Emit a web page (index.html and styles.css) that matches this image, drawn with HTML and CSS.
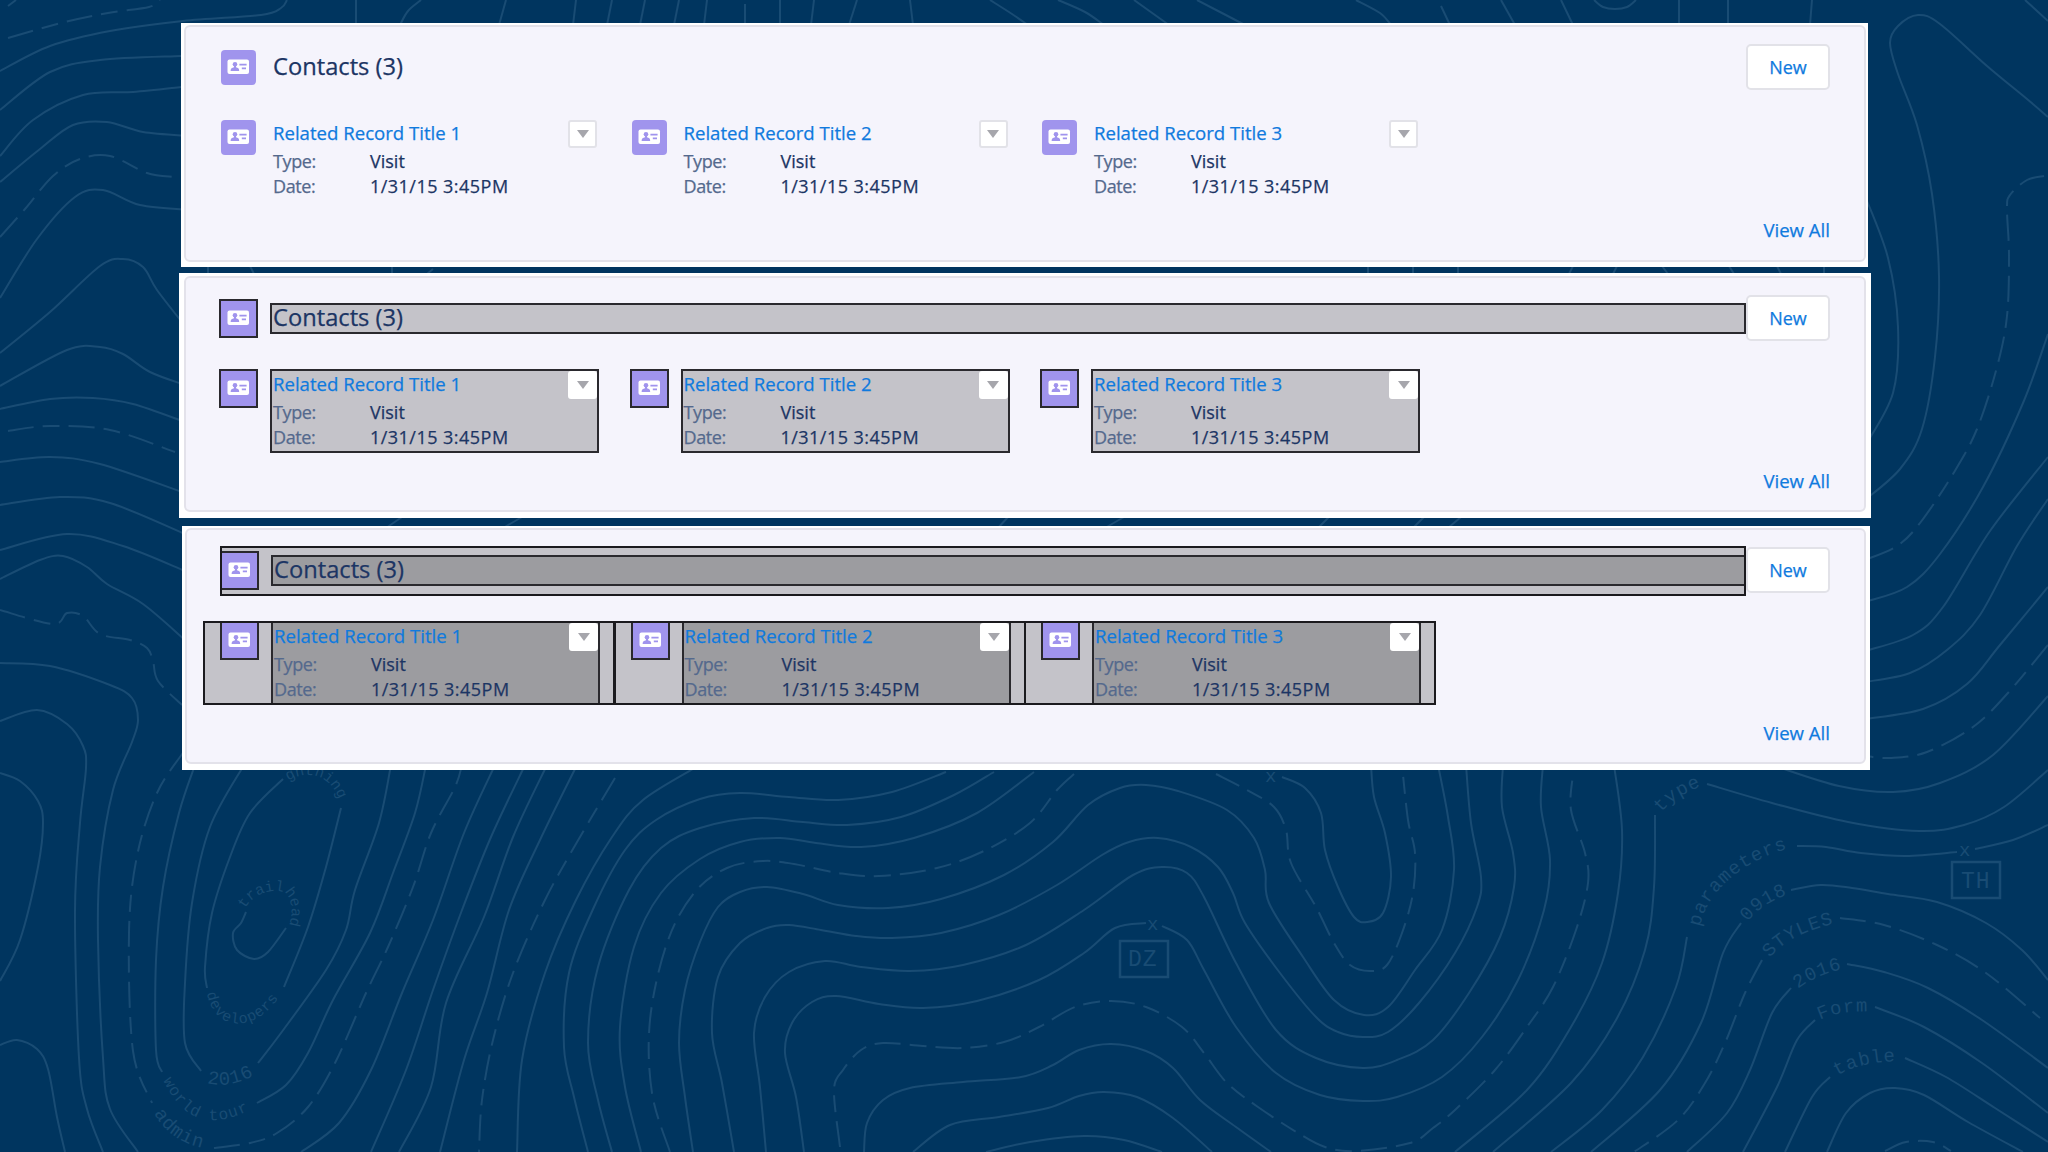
FILE: index.html
```html
<!DOCTYPE html>
<html lang="en">
<head>
    <meta charset="UTF-8">
    <meta name="viewport" content="width=device-width, initial-scale=1.0">
    <title>Related Records</title>
    <link rel="stylesheet" href="styles.css">
</head>
<body>
    <svg class="map" viewBox="0 0 2048 1152" aria-hidden="true">
        <defs>
            <path id="p-lightning" d="M288 781C308 768 335 775 341 808"/>
            <path id="p-trailhead" d="M245 909C252 893 278 886 287 895C294 905 292 918 287 932"/>
            <path id="p-developers" d="M207 993C214 1035 262 1035 286 985"/>
            <path id="p-2016a" d="M207 1083Q233 1090 263 1070"/>
            <path id="p-tour" d="M163 1080C180 1115 205 1134 254 1108"/>
            <path id="p-admin" d="M154 1113C165 1133 185 1147 214 1150"/>
            <path id="p-type" d="M1661 813Q1675 795 1708 784"/>
            <path id="p-parameters" d="M1700 927C1705 895 1740 860 1794 847"/>
            <path id="p-0918" d="M1748 922Q1760 904 1794 892"/>
            <path id="p-styles" d="M1770 958Q1788 933 1845 921"/>
            <path id="p-2016b" d="M1798 989Q1815 975 1850 967"/>
            <path id="p-form" d="M1820 1020Q1842 1009 1880 1012"/>
            <path id="p-table" d="M1837 1076Q1860 1061 1906 1061"/>
        </defs>
        <g id="contours"></g>
        <g class="map-text">
            <text class="small"><textPath href="#p-lightning">ghtning</textPath></text>
            <text class="small"><textPath href="#p-trailhead">trailhead</textPath></text>
            <text class="small wide"><textPath href="#p-developers">developers</textPath></text>
            <text><textPath href="#p-2016a">2016</textPath></text>
            <text class="mid"><textPath href="#p-tour">world tour</textPath></text>
            <text><textPath href="#p-admin">admin</textPath></text>
            <text><textPath href="#p-type">type</textPath></text>
            <text><textPath href="#p-parameters">parameters</textPath></text>
            <text><textPath href="#p-0918">0918</textPath></text>
            <text><textPath href="#p-styles">STYLES</textPath></text>
            <text><textPath href="#p-2016b">2016</textPath></text>
            <text><textPath href="#p-form">Form</textPath></text>
            <text><textPath href="#p-table">table</textPath></text>
            <text x="1147" y="930">x</text>
            <text x="1265" y="782">x</text>
            <text x="1959" y="856">x</text>
            <text class="big" x="1128" y="966">DZ</text>
            <text class="big" x="1961" y="888">TH</text>
        </g>
        <rect class="map-box" x="1120" y="941" width="48" height="36"/>
        <rect class="map-box" x="1952" y="862" width="48" height="36"/>
    </svg>

    <!-- contact icon, reused by every header and tile -->
    <svg class="sprite" aria-hidden="true">
        <symbol id="contact" viewBox="0 0 35 35">
            <rect x="6.5" y="9.500" width="21.500" height="14.500" rx="2" fill="#fff"/>
            <circle cx="14" cy="14.2" r="2.3"/>
            <path d="M13 15.500h2v1.800c2 .5 3.200 1.200 3.200 3.600H9.600c0-2.400 1.400-3.100 3.400-3.600z"/>
            <path d="M18.400 13.800h7.200v1.600h-7.200zM20.800 17.600h4.200v1.600h-4.200z"/>
        </symbol>
    </svg>

    <main>
        <section class="card card-plain">
            <div class="panel">
                <header class="header">
                    <div class="media">
                        <div class="figure"><svg class="icon"><use href="#contact"/></svg></div>
                        <h2 class="title">Contacts (3)</h2>
                    </div>
                    <button class="new">New</button>
                </header>
                <ul class="tiles">
                    <li class="tile">
                        <div class="figure"><svg class="icon"><use href="#contact"/></svg></div>
                        <div class="body">
                            <a class="name">Related Record Title 1</a>
                            <button class="more"></button>
                            <dl><dt>Type:</dt><dd>Visit</dd><dt>Date:</dt><dd>1/31/15 3:45PM</dd></dl>
                        </div>
                    </li>
                    <li class="tile">
                        <div class="figure"><svg class="icon"><use href="#contact"/></svg></div>
                        <div class="body">
                            <a class="name">Related Record Title 2</a>
                            <button class="more"></button>
                            <dl><dt>Type:</dt><dd>Visit</dd><dt>Date:</dt><dd>1/31/15 3:45PM</dd></dl>
                        </div>
                    </li>
                    <li class="tile">
                        <div class="figure"><svg class="icon"><use href="#contact"/></svg></div>
                        <div class="body">
                            <a class="name">Related Record Title 3</a>
                            <button class="more"></button>
                            <dl><dt>Type:</dt><dd>Visit</dd><dt>Date:</dt><dd>1/31/15 3:45PM</dd></dl>
                        </div>
                    </li>
                </ul>
                <footer class="footer"><a>View All</a></footer>
            </div>
        </section>

        <section class="card card-parts">
            <div class="panel">
                <header class="header">
                    <div class="media">
                        <div class="figure"><svg class="icon"><use href="#contact"/></svg></div>
                        <h2 class="title">Contacts (3)</h2>
                    </div>
                    <button class="new">New</button>
                </header>
                <ul class="tiles">
                    <li class="tile">
                        <div class="figure"><svg class="icon"><use href="#contact"/></svg></div>
                        <div class="body">
                            <a class="name">Related Record Title 1</a>
                            <button class="more"></button>
                            <dl><dt>Type:</dt><dd>Visit</dd><dt>Date:</dt><dd>1/31/15 3:45PM</dd></dl>
                        </div>
                    </li>
                    <li class="tile">
                        <div class="figure"><svg class="icon"><use href="#contact"/></svg></div>
                        <div class="body">
                            <a class="name">Related Record Title 2</a>
                            <button class="more"></button>
                            <dl><dt>Type:</dt><dd>Visit</dd><dt>Date:</dt><dd>1/31/15 3:45PM</dd></dl>
                        </div>
                    </li>
                    <li class="tile">
                        <div class="figure"><svg class="icon"><use href="#contact"/></svg></div>
                        <div class="body">
                            <a class="name">Related Record Title 3</a>
                            <button class="more"></button>
                            <dl><dt>Type:</dt><dd>Visit</dd><dt>Date:</dt><dd>1/31/15 3:45PM</dd></dl>
                        </div>
                    </li>
                </ul>
                <footer class="footer"><a>View All</a></footer>
            </div>
        </section>

        <section class="card card-parts card-media">
            <div class="panel">
                <header class="header">
                    <div class="media">
                        <div class="figure"><svg class="icon"><use href="#contact"/></svg></div>
                        <h2 class="title">Contacts (3)</h2>
                    </div>
                    <button class="new">New</button>
                </header>
                <ul class="tiles">
                    <li class="tile">
                        <div class="figure"><svg class="icon"><use href="#contact"/></svg></div>
                        <div class="body">
                            <a class="name">Related Record Title 1</a>
                            <button class="more"></button>
                            <dl><dt>Type:</dt><dd>Visit</dd><dt>Date:</dt><dd>1/31/15 3:45PM</dd></dl>
                        </div>
                    </li>
                    <li class="tile">
                        <div class="figure"><svg class="icon"><use href="#contact"/></svg></div>
                        <div class="body">
                            <a class="name">Related Record Title 2</a>
                            <button class="more"></button>
                            <dl><dt>Type:</dt><dd>Visit</dd><dt>Date:</dt><dd>1/31/15 3:45PM</dd></dl>
                        </div>
                    </li>
                    <li class="tile">
                        <div class="figure"><svg class="icon"><use href="#contact"/></svg></div>
                        <div class="body">
                            <a class="name">Related Record Title 3</a>
                            <button class="more"></button>
                            <dl><dt>Type:</dt><dd>Visit</dd><dt>Date:</dt><dd>1/31/15 3:45PM</dd></dl>
                        </div>
                    </li>
                </ul>
                <footer class="footer"><a>View All</a></footer>
            </div>
        </section>
    </main>

    <script src="contours.js"></script>
</body>
</html>
```

FILE: styles.css
```css
* {
    box-sizing: border-box;
}
body {
    margin: 0;
    min-height: 1152px;
    overflow: hidden;
    background: #00355f;
    color: #1c3564;
    font-family: "Open Sans", "Noto Sans", sans-serif;
    font-size: 18px;
}
main {
    position: relative;
    padding-top: 23px;
    -webkit-text-stroke: 0.25px;
}
h2, ul, dl, dd {
    margin: 0;
    padding: 0;
}
a {
    color: #0f7ade;
}

/* topographic background */
.map {
    position: absolute;
    top: 0;
    left: 0;
    width: 2048px;
    height: 1152px;
}
.map path, .map-box {
    fill: none;
    stroke: #194c74;
    stroke-width: 2;
}
.map .dashed {
    stroke-dasharray: 26 9 17 9;
}
.map-text {
    fill: #194c74;
    font-family: "Liberation Mono", monospace;
    font-size: 19px;
    letter-spacing: 1px;
}
.map-text .small {
    font-size: 15px;
    letter-spacing: 0;
}
.map-text .wide {
    letter-spacing: 0.8px;
}
.map-text .mid {
    font-size: 16px;
}
.map-text .big {
    font-size: 23px;
}
.map-box {
    stroke-width: 2.5;
}
.sprite {
    position: absolute;
    width: 0;
    height: 0;
}

/* cards */
.card {
    width: 1687px;
    height: 244px;
    margin-left: 181px;
    padding: 2px 2px 5px 3px;
    background: #fff;
}
.panel {
    height: 237px;
    padding: 16px 34px 0 33px;
    border: 2px solid #e3e2ea;
    border-radius: 6px;
    background: #f5f4fc;
}
.header {
    display: flex;
    align-items: center;
    height: 50px;
}
.media {
    display: flex;
    flex: 1;
    align-items: center;
    gap: 12px;
    height: 50px;
}
.figure {
    flex: none;
    width: 39px;
    height: 39px;
    padding: 2px;
}
.header .figure,
.header .title {
    margin-bottom: 2px;
}
.icon {
    display: block;
    width: 35px;
    height: 35px;
    border-radius: 4px;
    background: #a094ed;
    fill: #a094ed;
}
.title {
    flex: 1;
    height: 31px;
    padding-left: 3px;
    font-size: 23.700px;
    font-weight: 400;
    line-height: 28px;
}
.new {
    width: 84px;
    height: 46px;
    margin-bottom: 2px;
    padding: 0 0 1px;
    border: 2px solid #e2e2e8;
    border-radius: 5px;
    background: #fff;
    color: #0f7ade;
    font: inherit;
}
.tiles {
    display: flex;
    margin: 25px 0 0 -17px;
    list-style: none;
}
.tile {
    display: flex;
    flex: none;
    gap: 12px;
    width: 412px;
    height: 84px;
    margin-right: -1.5px;
    padding-left: 17px;
}
.body {
    display: grid;
    grid-template-columns: 1fr 29px;
    grid-template-rows: 31px 50px;
    width: 329px;
    padding: 0 2px 0 3px;
}
.name {
    font-size: 18.600px;
    line-height: 30px;
}
.more {
    display: flex;
    align-items: center;
    justify-content: center;
    height: 28px;
    margin-top: 2px;
    padding: 0;
    border: 2px solid #e2e2e8;
    border-radius: 3px;
    background: #fff;
}
.more::before {
    content: "";
    border: 6px solid transparent;
    border-top: 8px solid #a6a6ac;
    border-bottom: 0;
}
dl {
    display: grid;
    grid-column: 1 / 3;
    grid-template-columns: 97px 1fr;
    line-height: 25px;
}
dt {
    color: #54698d;
    letter-spacing: -0.4px;
}
dd:last-child {
    letter-spacing: 0.47px;
}
.footer {
    margin-top: 15px;
    text-align: right;
    font-size: 18.600px;
    line-height: 25px;
}

/* second card: figure and body marked */
.card-parts {
    width: 1692px;
    height: 245px;
    margin: 6px 0 0 179px;
    padding: 3px 5px 6px 5px;
}
.card-parts .panel {
    height: 236px;
}
.card-parts .icon {
    border-radius: 0;
}
.card-parts .figure,
.card-parts .title,
.card-parts .body {
    outline: 2px solid #2a292e;
    outline-offset: -2px;
}
.card-parts .title,
.card-parts .body {
    background: rgba(0, 0, 0, 0.2);
}
.card-parts .more {
    border-color: #fff;
}

/* third card: the media containers marked as well */
.card-media {
    width: 1688px;
    height: 244px;
    margin: 8px 0 0 182px;
    padding: 2px 4px 5px 3px;
}
.card-media .media,
.card-media .tile {
    outline: 2px solid #1b1a1e;
    outline-offset: -2px;
    background: rgba(0, 0, 0, 0.2);
}
```

FILE: contours.js
```js
// Contour lines as "x,y" points, smoothed when they are drawn
const SOLID = [
    "8,6 16,0",
    "0,71 50,46 110,31 183,21 261,15 281,8 287,0",
    "0,110 50,72 100,60 181,56",
    "0,156 33,120 83,95 133,92 181,87",
    "0,182 40,149 73,125 107,122 143,132 190,136",
    "0,298 37,239 75,197 103,190 140,205 190,210",
    "0,353 50,312 100,266 123,259 143,267 157,290 185,326",
    "0,386 67,350 100,347 123,354 150,372 185,385",
    "0,409 50,399 93,398 133,404 185,422",
    "0,462 50,457 100,464 185,493",
    "0,505 60,497 110,503 185,534",
    "0,550 67,534 123,546 185,571",
    "0,579 40,560 63,556 87,567 107,584 143,604 185,640",
    "0,663 50,666 110,685 132,698 138,720 132,742 113,790 100,867 98,940 103,1058 110,1109 138,1152",
    "0,721 37,710 67,724 83,746 86,768 80,823 75,911 79,1058 87,1109 103,1152",
    "0,773 20,781 38,801 43,823 38,867 20,940 0,981",
    "0,1045 17,1040 37,1049 48,1069 57,1117 65,1152",
    "195,765 179,813 163,887 156,960 156,1050 162,1072",
    "257,1103 286,1085 308,1053 333,1000 370,933 393,873 415,813 426,765",
    "244,765 210,827 192,903 185,983 185,1043 201,1071",
    "258,1063 281,1033 326,970 346,930 355,890 379,823 391,765",
    "283,779 250,813 230,857 212,913 205,967 207,988",
    "284,987 308,927 326,867 341,808",
    "246,912 241,923 233,933 237,950 254,959 268,952 286,928",
    "495,765 464,833 433,920 402,993 371,1070 339,1123 301,1152",
    "525,765 491,837 462,910 433,990 406,1070 371,1152",
    "547,765 513,837 484,917 446,1003 431,1087 399,1152",
    "577,765 540,840 509,910 487,993 464,1060 440,1152",
    "700,765 643,800 612,837 576,900 545,973 522,1060 517,1152",
    "588,1152 574,1097 564,1047 569,973 594,907 625,850 656,820 700,799 740,793 789,797 838,800 892,792 946,772",
    "612,1152 598,1100 588,1043 598,967 629,890 661,848 700,828 754,818 803,822 847,825 901,817 954,795 994,772",
    "641,1152 625,1087 620,1027 634,947 661,893 700,859 740,842 780,838 816,843 861,847 914,838 977,813 1034,772",
    "693,1152 685,1097 679,1043 685,990 700,942 718,907 740,892 767,887 803,894 838,905 888,908 941,899 1004,875 1053,842 1088,805 1120,788 1146,785 1178,791 1227,810 1254,838 1265,870 1269,903 1303,957 1334,1000 1364,1015 1388,1007 1415,970 1442,930 1454,870 1448,817 1438,765",
    "734,1152 722,1083 712,1033 718,977 740,943 767,928 789,925 821,930 856,936 892,938 941,933 999,915 1057,885 1102,855 1129,842 1158,838 1191,847 1218,867 1233,893 1245,923 1280,973 1316,1017 1338,1032 1363,1037 1388,1032 1419,1003 1455,953 1477,907 1481,877 1471,823 1466,765",
    "766,1152 760,1087 754,1033 765,997 789,972 825,961 861,967 910,971 963,965 1026,945 1084,910 1133,875 1162,867 1187,873 1204,897 1236,963 1276,1030 1316,1058 1363,1068 1397,1060 1433,1040 1469,993 1500,937 1514,887 1513,853 1502,807 1503,765",
    "804,1152 796,1097 785,1053 792,1023 812,1002 836,996 879,1004 923,1008 977,1001 1039,980 1084,953 1115,928 1146,923",
    "1162,926 1187,940 1204,970 1236,1027 1276,1073 1320,1095 1363,1101 1397,1097 1442,1077 1482,1037 1518,980 1544,910 1550,860 1541,807 1543,765",
    "864,1152 867,1123 883,1100 910,1088 963,1082 1021,1077 1053,1065 1079,1050 1111,1044 1146,1051 1173,1068 1200,1100 1236,1127 1271,1152",
    "913,1152 950,1125 999,1117 1048,1108 1079,1096 1104,1092 1137,1097 1173,1118 1212,1152",
    "986,1152 1030,1142 1084,1136 1124,1140 1162,1152",
    "1282,777 1305,788 1321,813 1325,850 1338,887 1354,917 1367,922 1383,913 1391,877 1385,833 1374,797 1371,765",
    "1614,765 1622,830 1618,893 1602,963 1571,1027 1527,1090 1455,1152",
    "1655,815 1654,887 1645,950 1616,1020 1571,1083 1493,1152",
    "1707,784 1772,803 1848,822 1919,831 1964,825 2004,807 2048,770",
    "1775,766 1839,786 1893,792 1940,783 1993,755 2048,696",
    "1687,937 1676,987 1643,1057 1602,1110 1551,1152",
    "1797,846 1826,847 1861,853 1906,856 1957,852",
    "1975,849 2013,840 2048,825",
    "1741,923 1723,953 1701,1023 1660,1090 1591,1152",
    "1791,890 1821,885 1852,888 1888,894 1937,902 1986,923 2022,950 2048,980",
    "1791,988 1772,1013 1750,1070 1727,1113 1687,1152",
    "1847,964 1884,972 1928,988 1982,1020 2048,1068",
    "1815,1020 1797,1040 1777,1087 1743,1152",
    "1875,1007 1924,1027 1982,1063 2048,1113",
    "1830,1077 1812,1097 1785,1152",
    "1905,1058 1946,1077 1995,1108 2048,1142",
    "1827,1152 1846,1113 1870,1093 1895,1088 1924,1095 1968,1122 2023,1152",
    "2025,0 2048,21",
    "2048,117 2027,99 1987,66 1940,24 1918,15 1898,26 1890,43 1898,74 1917,125 1932,194 1939,276 1935,357 1922,429 1900,469 1865,500",
    "1865,196 1888,258 1898,327 1893,393 1865,446",
    "2048,334 2023,403 1983,487 1940,554 1907,587 1865,602",
    "2048,457 1990,531 1943,607 1913,635 1865,651",
    "2048,499 2017,546 1980,615 1947,650 1910,673 1865,682",
    "2048,587 2000,645 1967,684 1923,709 1865,719",
    // strip above the first card
    "356,0 356,25", "421,0 408,11 400,25", "506,0 499,25", "576,0 573,25", "612,0 607,25",
    "645,0 640,25", "679,0 674,25", "707,0 704,25", "745,4 745,25", "780,0 780,25",
    "814,0 811,25", "857,0 849,25", "910,0 913,25", "990,0 1012,14 1028,25",
    "1058,0 1085,12 1104,25", "1134,0 1169,25", "1197,0 1245,25", "1356,0 1380,13 1391,25",
    "1441,6 1450,25", "1501,0 1515,25", "1561,0 1573,25", "1594,0 1603,7 1615,9 1627,7 1636,0",
    "1679,0 1679,25", "1728,0 1728,25", "1812,0 1810,25",
    // strips between the cards
    "208,266 208,274", "250,266 254,274", "392,266 392,274", "433,269 427,274",
    "1368,266 1368,274", "1413,266 1413,274", "1458,266 1458,274", "1573,266 1569,274",
    "1617,266 1613,274", "1662,266 1668,274", "1729,266 1734,274", "1777,266 1781,274", "1824,266 1824,274",
    "402,517 386,528", "522,517 503,528", "1008,517 998,528", "1124,517 1105,528",
    "1329,517 1318,528", "1424,517 1413,528", "1461,517 1448,528"
];

const DASHED = [
    "8,38 65,22 108,13 149,7 160,0",
    "0,237 25,209 53,176 80,159 110,156 147,173 174,177",
    "8,431 50,426 110,430 175,452",
    "0,610 53,624 67,613 83,616 100,634 130,640 147,648 153,661 158,681 182,705",
    "185,750 157,793 137,856 129,933 133,1051 152,1103",
    "214,1148 250,1143 277,1133 308,1107 335,1063 366,993 388,947 413,887 431,833 455,787 462,765",
    "615,778 580,837 545,900 513,973 493,1040 482,1100 479,1152",
    "670,1152 652,1093 650,1020 667,943 694,893 727,868 763,861 794,864 838,873 879,876 937,868 986,850 1030,823 1057,790 1074,774",
    "840,1147 834,1090 843,1070 861,1050 883,1043 923,1046 963,1048 1004,1042 1039,1027 1075,1007 1111,1001 1146,1007 1182,1027 1204,1053 1227,1083 1258,1107 1298,1133 1325,1147 1356,1151 1410,1143 1433,1128 1455,1110 1495,1070 1527,1027 1553,987 1576,930 1588,883 1585,853 1571,810 1573,774",
    "1216,774 1247,790 1274,807 1286,830 1291,863 1316,907 1334,943 1350,965 1370,971 1387,965 1402,933 1413,893 1415,853 1408,820 1402,765",
    "1762,960 1745,993 1725,1043 1705,1083 1678,1120 1634,1152",
    "1840,918 1884,925 1937,945 1986,973 2040,1018",
    "1885,1151 1906,1142 1933,1142 1951,1151",
    "2044,176 2027,180 2010,195 2007,209 2009,255 2007,316 1997,367 1977,429 1953,474 1920,523 1897,546 1865,560",
    "2048,645 2007,694 1973,727 1927,752 1890,758 1865,756"
];

function smooth(line) {
    const p = line.split(" ").map(s => s.split(",").map(Number));
    let d = `M${p[0]}`;
    for (let i = 0; i < p.length - 1; i++) {
        const a = p[i - 1] || p[i];
        const b = p[i];
        const c = p[i + 1];
        const e = p[i + 2] || c;
        d += `C${b[0] + (c[0] - a[0]) / 6},${b[1] + (c[1] - a[1]) / 6}`;
        d += ` ${c[0] - (e[0] - b[0]) / 6},${c[1] - (e[1] - b[1]) / 6} ${c}`;
    }
    return d;
}

let paths = "";
SOLID.forEach(line => paths += `<path d="${smooth(line)}"/>`);
DASHED.forEach(line => paths += `<path class="dashed" d="${smooth(line)}"/>`);
document.getElementById("contours").innerHTML = paths;
```
